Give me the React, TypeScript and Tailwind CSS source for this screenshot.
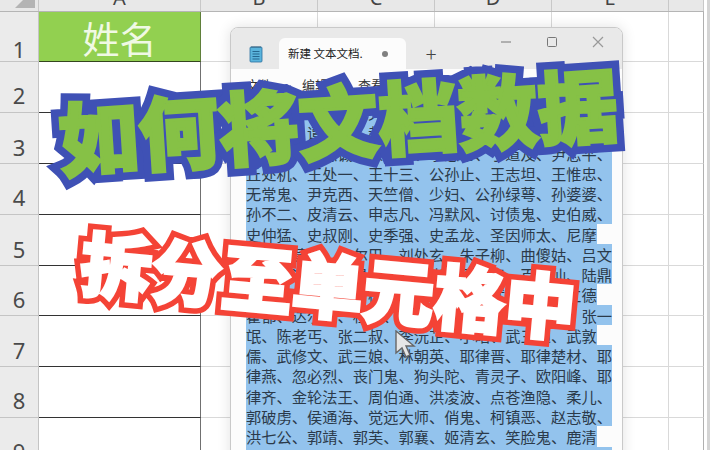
const columns = ["B", "C", "D", "E", ""]
const rows = [
  { n: 1, h: "h-[50px]", pad: "pb-[1px]" },
  { n: 2, h: "h-[51px]", pad: "pb-[6px]" },
  { n: 3, h: "h-[51px]", pad: "pb-[5px]" },
  { n: 4, h: "h-[51px]", pad: "pb-[6px]" },
  { n: 5, h: "h-[51px]", pad: "pb-[5px]" },
  { n: 6, h: "h-[50px]", pad: "pb-[5px]" },
  { n: 7, h: "h-[51px]", pad: "pb-[5px]" },
  { n: 8, h: "h-[51px]", pad: "pb-[6px]" },
  { n: 9, h: "h-[51px]", pad: "pb-[6px]" },
]

const lines = [
  "周芷若、丘处机、灭绝师太、张三丰、殷素素、黄蓉、",
  "王重阳、谭处端、郝大通、孙婆婆、马钰、刘处玄、程",
  "张志敬、祁志诚、宋德方、李志常、于道及、尹志平、",
  "丘处机、王处一、王十三、公孙止、王志坦、王惟忠、",
  "无常鬼、尹克西、天竺僧、少妇、公孙绿萼、孙婆婆、",
  "孙不二、皮清云、申志凡、冯默风、讨债鬼、史伯威、",
  "史仲猛、史叔刚、史季强、史孟龙、圣因师太、尼摩",
  "星、李莫愁、沙尔巴、刘处玄、朱子柳、曲傻姑、吕文",
  "立、宋远桥、苏星河、张志光、冯阿三、百草仙、陆鼎",
  "陆冠英、陈玄风、梅超风、曲灵风、武眠风、陆立德",
  "霍都、达尔巴、程英、苗人凤、胡一刀、田归农、张一",
  "氓、陈老丐、张二叔、李沅芷、小昭、武三通、武敦",
  "儒、武修文、武三娘、林朝英、耶律晋、耶律楚材、耶",
  "律燕、忽必烈、丧门鬼、狗头陀、青灵子、欧阳峰、耶",
  "律齐、金轮法王、周伯通、洪凌波、点苍渔隐、柔儿、",
  "郭破虏、侯通海、觉远大师、俏鬼、柯镇恶、赵志敬、",
  "洪七公、郭靖、郭芙、郭襄、姬清玄、笑脸鬼、鹿清",
  "笃、崔志方、黑衣僧、黄袍、黄药师、黄蓉、程瑶迦、",
]

function NotepadIcon() {
  return (
    <svg width="14" height="18" viewBox="0 0 14 18">
      <rect x="1" y="2" width="12" height="15" rx="1" fill="#5ab4dc" stroke="#2a6f9e" strokeWidth="0.8" />
      <path d="M3 1v2M5 1v2M7 1v2M9 1v2M11 1v2" stroke="#33566f" strokeWidth="0.8" />
      <path d="M3.5 6.5h7M3.5 9h7M3.5 11.5h7M3.5 14h7" stroke="#1f5f86" strokeWidth="0.9" />
    </svg>
  )
}

function Sheet() {
  return (
    <div className="flex h-[450px] w-[720px] overflow-hidden bg-white font-['Noto_Sans','Noto_Sans_CJK_SC',sans-serif]">
      <div className="w-[704px] shrink-0">
        <div className="flex h-[12px] border-b border-[#b5b5b5] bg-[#e8e8e8] text-[20px] leading-none text-[#444]">
          <div className="relative w-[39px] shrink-0 overflow-hidden border-r border-[#c8c8c8]">
            <div className="absolute right-[3px] bottom-[3px] h-0 w-0 border-b-[20px] border-l-[20px] border-b-[#b4b4b4] border-l-transparent" />
          </div>
          <div className="flex w-[162px] shrink-0 items-end justify-center border-r border-[#c8c8c8] pb-[3px]">A</div>
          {columns.map((c, i) => (
            <div
              key={i}
              className={`flex items-end justify-center border-r border-[#c8c8c8] pb-[3px] ${i === 4 ? "w-[35px]" : "w-[117px]"}`}
            >
              {c}
            </div>
          ))}
        </div>
        {rows.map((r) => (
          <div key={r.n} className={`flex ${r.h}`}>
            <div className={`flex w-[39px] shrink-0 items-end justify-center border-r border-b border-[#c4c4c4] bg-[#ebebeb] text-[22px] leading-none text-[#4a4a4a] ${r.pad}`}>
              {r.n}
            </div>
            {r.n === 1 ? (
              <div className="flex w-[162px] shrink-0 items-center justify-center border-r border-b border-r-[#5f7f3a] border-b-[#35461f] bg-[#92d050] pt-[5px] text-[37px] leading-none text-[#f0f9e4]">
                姓名
              </div>
            ) : (
              <div className="w-[162px] shrink-0 border-r border-b border-r-[#707070] border-b-[#333]" />
            )}
            {columns.map((c, i) => (
              <div key={i} className={`border-r border-b border-[#d9d9d9] ${i === 4 ? "w-[35px] border-r-[#b0b0b0]" : "w-[117px]"}`} />
            ))}
          </div>
        ))}
      </div>
      <div className="ml-[3px] w-[3px] shrink-0 bg-[#d4d4d4]" />
    </div>
  )
}

function Notepad() {
  return (
    <div className="absolute top-[27px] left-[230px] h-[440px] w-[393px] overflow-hidden rounded-t-[8px] border border-[#c9c9c9] bg-[#fcfcfc] font-['Noto_Sans_CJK_SC',sans-serif] shadow-[0_0_14px_rgba(0,0,0,0.12)]">
      <div className="flex h-[41px] items-end bg-[#e9e9e9]">
        <div className="flex h-[31px] w-[48px] items-center justify-center pl-[2px]">
          <NotepadIcon />
        </div>
        <div className="flex h-[31px] w-[127px] items-center rounded-t-[6px] bg-[#fcfcfc] pr-[18px] pl-[9px] text-[11.5px] text-[#222]">
          <span className="w-[75px] overflow-hidden whitespace-nowrap">新建 文本文档.txt</span>
          <span className="ml-auto h-[6px] w-[6px] rounded-full bg-[#808080]" />
        </div>
        <div className="flex h-[31px] w-[50px] items-center justify-center text-[20px] leading-none font-light text-[#444]">+</div>
        <div className="relative ml-auto h-full w-[140px]">
          <svg className="absolute inset-0" width="140" height="41" viewBox="0 0 140 41" fill="none" stroke="#777" strokeWidth="1">
            <path d="M19 14h10" />
            <rect x="65.5" y="9.5" width="9" height="9" rx="1" />
            <path d="M121 9l-10 10M111 9l10 10" stroke="#999" strokeWidth="1.2" />
          </svg>
        </div>
      </div>
      <div className="flex h-[33px] items-start gap-[30px] pt-[6px] pl-[15px] text-[13px] text-[#333]">
        <span>文件</span>
        <span>编辑</span>
        <span>查看</span>
      </div>
      <div className="pl-[15px] text-[15.25px] leading-[20.27px] text-[#2b3a4a]">
        {lines.map((l, i) => (
          <div key={i} className="h-[20.27px] whitespace-nowrap">
            <span className="inline-block bg-[#93c3ed]">{l}</span>
          </div>
        ))}
      </div>
    </div>
  )
}

export default function App() {
  return (
    <div className="relative h-[450px] w-[720px] overflow-hidden">
      <Sheet />
      <Notepad />
      <svg className="absolute top-[330px] left-[394px]" width="24" height="30" viewBox="0 0 24 30">
        <path d="M2 1v22l6-5 4 9 4-2-4-9h8z" fill="#e6e6e6" stroke="#666" strokeWidth="1.4" />
      </svg>
      {/* fat outlined titles: blue/red stroke below, same text with a thin fill-coloured stroke on top */}
      <div className="absolute top-[63px] left-[58px] origin-center -rotate-[3.7deg] font-['Noto_Sans_CJK_SC',sans-serif] text-[80px] leading-[110px] font-black whitespace-nowrap">
        <span className="text-[#3f51b5] [-webkit-text-stroke:18px_#3f51b5]">如何将文档数据</span>
        <span aria-hidden="true" className="absolute top-0 left-0 text-[#86c146] [-webkit-text-stroke:3px_#86c146]">如何将文档数据</span>
      </div>
      <div className="absolute top-[237px] left-[80px] origin-center rotate-[5.2deg] font-['Noto_Sans_CJK_SC',sans-serif] text-[71px] leading-[90px] font-black whitespace-nowrap">
        <span className="text-[#f44336] [-webkit-text-stroke:14px_#f44336]">拆分至单元格中</span>
        <span aria-hidden="true" className="absolute top-0 left-0 text-white [-webkit-text-stroke:3px_#ffffff]">拆分至单元格中</span>
      </div>
    </div>
  )
}
